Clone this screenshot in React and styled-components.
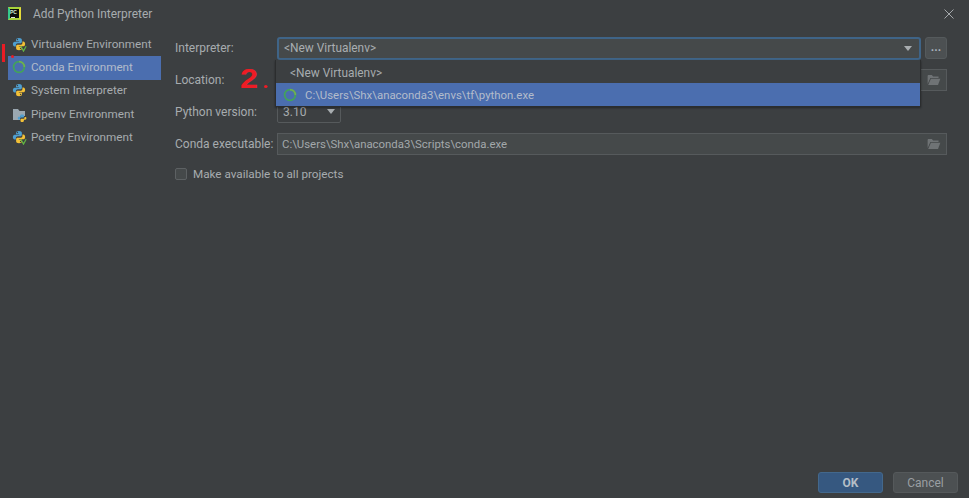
import styled, { createGlobalStyle } from "styled-components";

const Global = createGlobalStyle`
  html, body { margin: 0; padding: 0; background: #3c3f41; }
  #root { width: 969px; height: 498px; overflow: hidden; }
`;

function PythonIcon({ size = 14 }) {
  return (
    <svg width={size} height={size} viewBox="0 0 16 16">
      <path fill="#4f9fd0" d="M8 1C5.6 1 4.6 1.9 4.6 3.2V4.8H8.2V5.4H3.2C1.8 5.4 1 6.5 1 8.1 1 9.8 1.8 10.9 3 10.9H4.4V9.2C4.4 7.9 5.4 7 6.7 7H9.6C10.6 7 11.3 6.3 11.3 5.3V3.2C11.3 1.9 10.2 1 8 1Z" />
      <circle cx="6.2" cy="2.9" r=".8" fill="#3c3f41" />
      <path fill="#f2c037" d="M8 15C10.4 15 11.4 14.1 11.4 12.8V11.2H7.8V10.6H12.8C14.2 10.6 15 9.5 15 7.9 15 6.2 14.2 5.1 13 5.1H11.9V6.8C11.9 8.1 10.9 8.9 9.6 8.9H6.4C5.4 8.9 4.7 9.6 4.7 10.6V12.8C4.7 14.1 5.8 15 8 15Z" />
      <circle cx="9.8" cy="13.1" r=".8" fill="#3c3f41" />
    </svg>
  );
}

function VenvIcon() {
  return (
    <IconWrap>
      <PythonIcon />
      <VBadge viewBox="0 0 8 8">
        <path d="M1 1.5 4 7 7 1.5" fill="none" stroke="#62b543" strokeWidth="1.4" />
      </VBadge>
    </IconWrap>
  );
}

function CondaIcon() {
  return (
    <svg width="14" height="14" viewBox="0 0 14 14">
      <circle cx="7" cy="7" r="5.4" fill="none" stroke="#43a35a" strokeWidth="1.7" />
      <path d="M7 1.6A5.4 5.4 0 0 1 12.4 7" fill="none" stroke="#6fae52" strokeWidth="1.7" />
    </svg>
  );
}

function PipenvIcon() {
  return (
    <IconWrap>
      <svg width="15" height="15" viewBox="0 0 15 15">
        <path fill="#9aa7b0" d="M1 2H6L7.5 4H13V9H8V13H1Z" />
        <path fill="#4f9fd0" d="M10 7.5C8.7 7.5 8.2 8 8.2 8.8V9.8H6.8C6.2 9.8 5.8 10.4 5.8 11.2 5.8 12 6.2 12.5 6.9 12.5H8.2V11.5C8.2 10.9 8.7 10.5 9.3 10.5H11.2C11.7 10.5 12 10.2 12 9.7V8.8C12 8 11.3 7.5 10 7.5Z" />
        <path fill="#f2c037" d="M10 15C11.3 15 11.9 14.5 11.9 13.7V12.7H13.3C13.9 12.7 14.4 12.1 14.4 11.3 14.4 10.5 14 10 13.3 10H12.5V10.8C12.5 11.4 12 11.8 11.4 11.8H9.4C8.8 11.8 8.5 12.1 8.5 12.6V13.7C8.5 14.5 8.9 15 10 15Z" />
      </svg>
    </IconWrap>
  );
}

function FolderIcon() {
  return (
    <svg width="14" height="10" viewBox="0 0 14 11">
      <path fill="#6f7375" d="M0 1.2C0 .5.4 0 1 0H4.6L6 1.6H12V3.4H3L0 9.8Z" />
      <path fill="#6f7375" d="M3.6 4.2H14L11.4 11H.6Z" />
    </svg>
  );
}

function Caret() {
  return (
    <svg width="8" height="5" viewBox="0 0 10 6">
      <path d="M0 0H10L5 6Z" fill="#a8adb0" />
    </svg>
  );
}

const items = [
  { label: "Virtualenv Environment", icon: <VenvIcon /> },
  { label: "Conda Environment", icon: <CondaIcon />, selected: true },
  { label: "System Interpreter", icon: <PythonIcon /> },
  { label: "Pipenv Environment", icon: <PipenvIcon /> },
  { label: "Poetry Environment", icon: <VenvIcon /> },
];

export default function App() {
  return (
    <Dialog>
      <Global />
      <TitleBar>
        <Logo>PC<LogoDash /></Logo>
        <Title>Add Python Interpreter</Title>
        <CloseIcon viewBox="0 0 10 10">
          <path d="M.5.5 9.5 9.5M9.5.5.5 9.5" stroke="#a4a8ab" strokeWidth="1" fill="none" />
        </CloseIcon>
      </TitleBar>

      <Body>
        <Sidebar>
          {items.map(({ label, icon, selected }) => (
            <SideItem key={label} $selected={selected}>
              <IconSlot>{icon}</IconSlot>
              <span>{label}</span>
            </SideItem>
          ))}
        </Sidebar>

        <Form>
          <Row $height={32}>
            <Label>Interpreter:</Label>
            <Combo>
              <span>&lt;New Virtualenv&gt;</span>
              <Caret />
            </Combo>
            <DotsButton>...</DotsButton>
            <Popup>
              <PopupRow>&lt;New Virtualenv&gt;</PopupRow>
              <PopupRow $active>
                <CondaIcon />
                <PathText>C:\Users\Shx\anaconda3\envs\tf\python.exe</PathText>
              </PopupRow>
            </Popup>
          </Row>
          <Row $height={31}>
            <Label>Location:</Label>
            <Field>
              <FolderIcon />
            </Field>
            <Annotation2>2<Dot2 /></Annotation2>
          </Row>
          <Row $height={33}>
            <Label>Python version:</Label>
            <VersionSelect>
              <span>3.10</span>
              <Caret />
            </VersionSelect>
          </Row>
          <Row $height={32}>
            <Label>Conda executable:</Label>
            <Field>
              <PathText>C:\Users\Shx\anaconda3\Scripts\conda.exe</PathText>
              <FolderIcon />
            </Field>
          </Row>
          <CheckRow>
            <CheckBox />
            <span>Make available to all projects</span>
          </CheckRow>
        </Form>
      </Body>

      <Footer>
        <OkButton>OK</OkButton>
        <CancelButton>Cancel</CancelButton>
      </Footer>

      <Annotation1 />
      <Dot1 />
    </Dialog>
  );
}

const Dialog = styled.div`
  position: relative;
  width: 969px;
  height: 498px;
  display: flex;
  flex-direction: column;
  background: #3c3f41;
  color: #a7acaf;
  font-family: Roboto, "Noto Sans", sans-serif;
  font-size: 12px;
  box-sizing: border-box;
`;

const TitleBar = styled.div`
  height: 29px;
  flex: none;
  display: flex;
  align-items: center;
  padding: 0 15px 2px 8px;
  box-sizing: border-box;
`;

const Logo = styled.div`
  position: relative;
  width: 13px;
  height: 13px;
  box-sizing: border-box;
  background: #0c0f0c;
  border: 2px solid #a8d33a;
  border-right-color: #e6dc3a;
  border-left-color: #35c98a;
  color: #d8f0d8;
  font: bold 5px/6px "Liberation Sans", sans-serif;
`;

const LogoDash = styled.i`
  position: absolute;
  left: 1px;
  bottom: 0;
  width: 4px;
  height: 1px;
  background: #e0e0e0;
`;

const Title = styled.div`
  margin-left: 12px;
  flex: 1;
  font-size: 11.9px;
`;

const CloseIcon = styled.svg`
  width: 10px;
  height: 10px;
`;

const Body = styled.div`
  flex: 1;
  display: flex;
  min-height: 0;
`;

const Sidebar = styled.div`
  width: 153px;
  margin: 4px 0 0 8px;
  flex: none;
  font-size: 11.7px;
`;

const SideItem = styled.div`
  height: 23.3px;
  padding-bottom: 2px;
  box-sizing: border-box;
  display: flex;
  align-items: center;
  background: ${(p) => (p.$selected ? "#4b6eaf" : "transparent")};
  color: ${(p) => (p.$selected ? "#b3bccb" : "#a7acaf")};
`;

const IconSlot = styled.div`
  width: 23px;
  padding-left: 4px;
  box-sizing: border-box;
  display: flex;
  align-items: center;
  flex: none;
`;

const IconWrap = styled.div`
  position: relative;
  width: 14px;
  height: 14px;
`;

const VBadge = styled.svg`
  position: absolute;
  right: -1px;
  bottom: -1px;
  width: 7px;
  height: 7px;
`;

const Form = styled.div`
  flex: 1;
  padding: 3px 22px 0 14px;
  min-width: 0;
`;

const Row = styled.div`
  position: relative;
  height: ${(p) => p.$height}px;
  display: flex;
  align-items: center;
`;

const Label = styled.div`
  width: 102px;
  flex: none;
`;

const PathText = styled.span`
  font-size: 11.4px;
`;

const Combo = styled.div`
  width: 644px;
  height: 23px;
  flex: none;
  box-sizing: border-box;
  display: flex;
  align-items: center;
  justify-content: space-between;
  padding: 0 7px 0 5px;
  background: #45494a;
  border: 2px solid #3f6487;
  border-radius: 3px;
  color: #a9aeb1;
  font-size: 11.9px;
`;

const DotsButton = styled.div`
  width: 22px;
  height: 22px;
  margin: -1px 0 0 4px;
  box-sizing: border-box;
  flex: none;
  display: flex;
  align-items: center;
  justify-content: center;
  padding-bottom: 2px;
  background: #4c5052;
  border: 1px solid #555a5c;
  border-radius: 3px;
  color: #a7b0bb;
  font-weight: 700;
`;

const Popup = styled.div`
  position: absolute;
  left: 100px;
  top: 28px;
  width: 646px;
  background: #3c3f41;
  border: 1px solid #2b2d2e;
  border-top: none;
  box-sizing: border-box;
  box-shadow: 0 1px 2px rgba(0, 0, 0, 0.4);
  font-size: 11.9px;
  z-index: 2;
`;

const PopupRow = styled.div`
  height: 23px;
  box-sizing: border-box;
  display: flex;
  align-items: center;
  gap: 8px;
  padding-left: ${(p) => (p.$active ? "7px" : "14px")};
  padding-top: ${(p) => (p.$active ? "0" : "2px")};
  background: ${(p) => (p.$active ? "#4b6eaf" : "transparent")};
  color: ${(p) => (p.$active ? "#b3bccb" : "#a7acaf")};
`;

const Field = styled.div`
  flex: 1;
  height: 22px;
  box-sizing: border-box;
  display: flex;
  align-items: center;
  justify-content: space-between;
  padding: 0 5px 0 4px;
  background: #45494a;
  border: 1px solid #565a5c;
  color: #a3a8ab;
  & > svg:only-child {
    margin-left: auto;
  }
`;

const VersionSelect = styled.div`
  width: 64px;
  height: 22px;
  box-sizing: border-box;
  display: flex;
  align-items: center;
  justify-content: space-between;
  padding: 0 5px;
  border: 1px solid #565a5c;
  border-radius: 2px;
  color: #a7acaf;
`;

const CheckRow = styled.div`
  display: flex;
  align-items: center;
  gap: 6px;
  height: 27px;
  font-size: 11.7px;
`;

const CheckBox = styled.div`
  width: 12px;
  height: 12px;
  box-sizing: border-box;
  background: #45494a;
  border: 1px solid #5d6163;
  border-radius: 2px;
`;

const Footer = styled.div`
  height: 33px;
  flex: none;
  display: flex;
  justify-content: flex-end;
  gap: 10px;
  padding: 0 11px 5px 0;
  box-sizing: border-box;
`;

const OkButton = styled.div`
  width: 65px;
  height: 21px;
  margin-top: 7px;
  display: flex;
  align-items: center;
  justify-content: center;
  background: #365880;
  border: 1px solid #43688c;
  border-radius: 3px;
  box-sizing: border-box;
  color: #b4bdc6;
  font-weight: 700;
`;

const CancelButton = styled(OkButton)`
  background: #4c5052;
  border-color: #55595b;
  color: #9a9fa2;
  font-weight: 400;
`;

const Annotation1 = styled.div`
  position: absolute;
  left: 2px;
  top: 44px;
  width: 3px;
  height: 18px;
  background: #ea1c24;
`;

const Dot1 = styled.div`
  position: absolute;
  left: 11px;
  top: 55px;
  width: 3px;
  height: 3px;
  border-radius: 50%;
  background: #ea1c24;
`;

const Annotation2 = styled.div`
  position: absolute;
  left: 65px;
  top: -1px;
  color: #ee1c25;
  font: 700 27px/32px "Liberation Sans", sans-serif;
  transform: scaleX(1.2);
  transform-origin: left center;
  z-index: 1;
`;

const Dot2 = styled.i`
  position: absolute;
  left: 20px;
  top: 22px;
  width: 3px;
  height: 3px;
  border-radius: 50%;
  background: #ee1c25;
`;
